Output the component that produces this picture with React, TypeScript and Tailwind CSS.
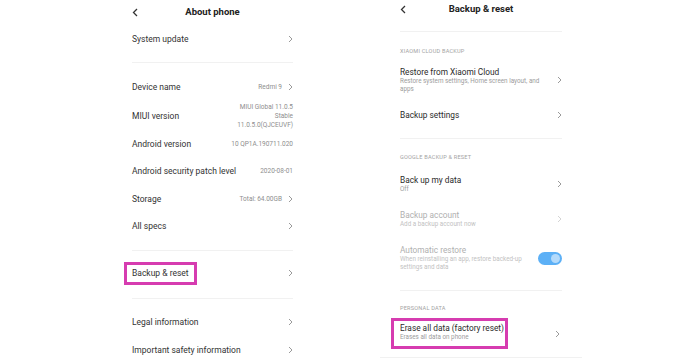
import React from 'react'

const Chevron = ({ light = false }: { light?: boolean }) => (
  <svg width="5" height="8" viewBox="0 0 5 8" className="shrink-0">
    <polyline points="1,1 4,4 1,7" fill="none" stroke={light ? '#d4d4d4' : '#9a9a9a'} strokeWidth="1" />
  </svg>
)

const Back = () => (
  <svg width="6" height="9" viewBox="0 0 6 9" className="shrink-0">
    <polyline points="5,1 1.5,4.5 5,8" fill="none" stroke="#333" strokeWidth="1.3" />
  </svg>
)

const Divider = ({ className = '' }: { className?: string }) => <div className={`h-px bg-[#f1f1f1] ${className}`} />

const Row = ({ label, value, chevron = true, h }: { label: React.ReactNode; value?: React.ReactNode; chevron?: boolean; h: string }) => (
  <div className={`flex items-center justify-between ${h}`}>
    <span className="text-[8.5px] text-[#333]">{label}</span>
    <div className="flex items-center gap-[6px]">
      {value && <span className="text-[6.5px] text-[#8e8e8e] text-right leading-[9px]">{value}</span>}
      {chevron && <Chevron />}
    </div>
  </div>
)

const Header = ({ title, h }: { title: string; h: string }) => (
  <div className={`grid grid-cols-[12px_1fr_12px] items-center ${h}`}>
    <Back />
    <span className="text-center text-[9.5px] font-bold text-[#222]">{title}</span>
    <span />
  </div>
)

const Section = ({ children, className = '' }: { children: string; className?: string }) => (
  <div className={`h-[8px] text-[5.6px] leading-[8px] tracking-[0.2px] text-[#a3a3a3] uppercase ${className}`}>{children}</div>
)

const Item = ({ title, sub, className = '', disabled = false, right }: { title: string; sub: React.ReactNode; className?: string; disabled?: boolean; right?: React.ReactNode }) => (
  <div className={`flex items-center justify-between ${className}`}>
    <div>
      <div className={`text-[8.3px] leading-[10px] ${disabled ? 'text-[#b0b0b0]' : 'text-[#2a2a2a]'}`}>{title}</div>
      <div className={`text-[6.3px] leading-[8px] ${disabled ? 'text-[#c2c2c2]' : 'text-[#9c9c9c]'}`}>{sub}</div>
    </div>
    {right ?? <Chevron light={disabled} />}
  </div>
)

export default function App() {
  return (
    <div className="flex w-[696px] h-[364px] overflow-hidden bg-white" style={{ fontFamily: 'Roboto, "Noto Sans", sans-serif' }}>
      {/* About phone */}
      <div className="relative ml-[132px] w-[161px] flex flex-col">
        <Header title="About phone" h="h-[24px]" />
        <Row label="System update" h="h-[30px]" />
        <Divider className="mt-[8px]" />
        <Row label="Device name" value="Redmi 9" h="mt-[10px] h-[28px]" />
        <Row
          label="MIUI version"
          value={
            <>
              MIUI Global 11.0.5
              <br />
              Stable
              <br />
              11.0.5.0(QJCEUVF)
            </>
          }
          chevron={false}
          h="h-[30px]"
        />
        <Row label="Android version" value="10 QP1A.190711.020" chevron={false} h="h-[26px]" />
        <Row label="Android security patch level" value="2020-08-01" chevron={false} h="h-[28px]" />
        <Row label="Storage" value="Total: 64.00GB" h="h-[28px]" />
        <Row label="All specs" h="h-[26px]" />
        <Divider className="mt-[11px]" />
        <Row
          label={
            <span className="-ml-[8px] inline-flex h-[23px] w-[73px] items-center border-[3px] border-[#d63cb0] pl-[5px]">Backup &amp; reset</span>
          }
          h="mt-[8px] h-[28px]"
        />
        <Divider className="mt-[11px]" />
        <Row label="Legal information" h="mt-[9px] h-[28px]" />
        <Row label="Important safety information" h="h-[28px]" />
      </div>

      {/* Backup & reset */}
      <div className="ml-[107px] w-[162px] flex flex-col">
        <Header title="Backup & reset" h="h-[19px]" />
        <Divider className="mt-[12px]" />
        <Section className="mt-[15px]">Xiaomi Cloud Backup</Section>
        <Item
          className="mt-[12px]"
          title="Restore from Xiaomi Cloud"
          sub={
            <>
              Restore system settings, Home screen layout, and
              <br />
              apps
            </>
          }
        />
        <div className="mt-[12px] flex h-[20px] items-center justify-between">
          <span className="text-[8.3px] text-[#2a2a2a]">Backup settings</span>
          <Chevron />
        </div>
        <Divider className="mt-[13px]" />
        <Section className="mt-[14px]">Google Backup &amp; Reset</Section>
        <Item className="mt-[14px]" title="Back up my data" sub="Off" />
        <Item className="mt-[17px]" title="Backup account" sub="Add a backup account now" disabled />
        <Item
          className="mt-[17px]"
          title="Automatic restore"
          sub={
            <>
              When reinstalling an app, restore backed-up
              <br />
              settings and data
            </>
          }
          disabled
          right={
            <div className="flex h-[13px] w-[24px] items-center justify-end rounded-full bg-[#5cb0f6] pr-[2px]">
              <div className="h-[9px] w-[9px] rounded-full bg-[#b3dafb]" />
            </div>
          }
        />
        <Divider className="mt-[19px]" />
        <Section className="mt-[13px]">Personal Data</Section>
        <div className="mt-[6px] flex items-center justify-between">
          <div className="-ml-[9px] h-[31px] w-[117px] border-[3px] border-[#d63cb0] pl-[6px] pt-[2px]">
            <div className="text-[8.3px] leading-[10px] text-[#2a2a2a]">Erase all data (factory reset)</div>
            <div className="text-[6.3px] leading-[8px] text-[#9c9c9c]">Erases all data on phone</div>
          </div>
          <div className="pr-[2px]">
            <Chevron />
          </div>
        </div>
        <Divider className="mt-[8px] -mx-[20px]" />
      </div>
    </div>
  )
}
